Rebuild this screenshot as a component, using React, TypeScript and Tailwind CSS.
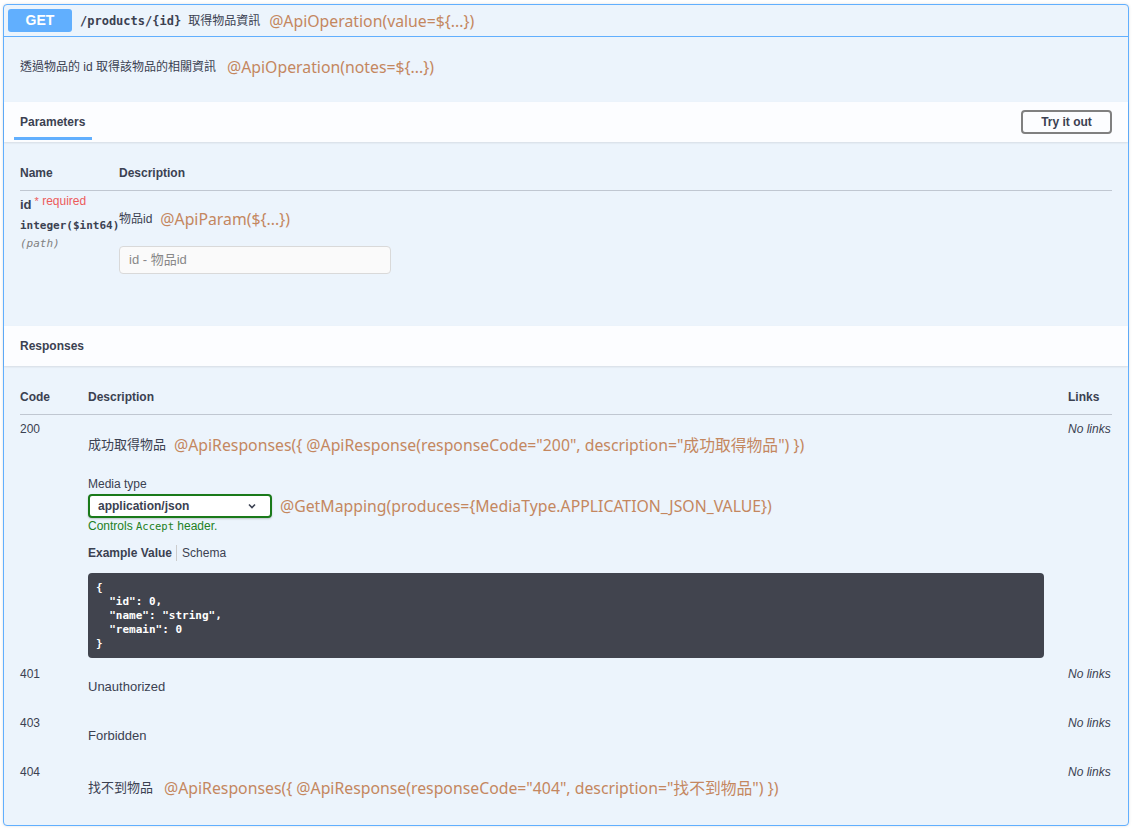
import React from "react";

const ann =
  "font-['Noto_Sans','Noto_Sans_CJK_TC',sans-serif] text-[15.8px] leading-[22px] text-[#c4875f]";
const mono = "font-['DejaVu_Sans_Mono','Liberation_Mono',monospace]";

type Resp = {
  code: string;
  desc: string;
  note?: string;
  body?: boolean;
};

const responses: Resp[] = [
  {
    code: "200",
    desc: "成功取得物品",
    note: '@ApiResponses({ @ApiResponse(responseCode="200", description="成功取得物品") })',
    body: true,
  },
  { code: "401", desc: "Unauthorized" },
  { code: "403", desc: "Forbidden" },
  {
    code: "404",
    desc: "找不到物品",
    note: '@ApiResponses({ @ApiResponse(responseCode="404", description="找不到物品") })',
  },
];

function SectionHeader({ children }: { children: React.ReactNode }) {
  return (
    <div className="h-[40px] bg-white/85 shadow-[0_1px_2px_rgba(0,0,0,0.1)] flex items-center justify-between pl-[16px] pr-[16px]">
      {children}
    </div>
  );
}

export default function App() {
  return (
    <div className="min-h-screen bg-white pt-[4px] pl-[3px] font-['Liberation_Sans','Noto_Sans_CJK_TC',sans-serif] text-[#3b4151]">
      <div className="w-[1126px] border border-[#61affe] rounded-[4px] bg-[#ecf4fc] shadow-[0_0_3px_rgba(0,0,0,0.12)]">
        {/* summary */}
        <div className="h-[32px] flex items-center pl-[4px] border-b border-[#61affe]">
          <div className="w-[64px] h-[23px] rounded-[3px] bg-[#61affe] text-white font-bold text-[14px] flex items-center justify-center">
            GET
          </div>
          <span className={`${mono} ml-[8px] text-[12px] font-bold`}>/products/{"{id}"}</span>
          <span className="ml-[7px] text-[12px]">取得物品資訊</span>
          <span className={`${ann} ml-[9px]`}>@ApiOperation(value=${"{...}"})</span>
        </div>

        {/* description */}
        <div className="h-[65px] flex items-center pl-[16px] pb-[5px]">
          <span className="text-[12px]">透過物品的 id 取得該物品的相關資訊</span>
          <span className={`${ann} ml-[11px]`}>@ApiOperation(notes=${"{...}"})</span>
        </div>

        {/* parameters */}
        <div className="h-[40px] bg-white/85 shadow-[0_1px_2px_rgba(0,0,0,0.1)] flex items-stretch justify-between pl-[10px] pr-[16px]">
          <div className="w-[78px] flex flex-col">
            <div className="pt-[11px] pl-[6px] leading-[18px] text-[12px] font-bold">Parameters</div>
            <div className="mt-[6px] h-[3px] bg-[#61affe]" />
          </div>
          <div className="flex items-center">
            <button className="w-[91px] h-[24px] border-2 border-[#808080] rounded-[4px] text-[12px] font-bold bg-transparent">
              Try it out
            </button>
          </div>
        </div>

        <div className="h-[184px] px-[16px] pt-[22px]">
          <div className="flex text-[12px] font-bold leading-[18px] pb-[8px] border-b border-[#3b4151]/25">
            <div className="w-[99px]">Name</div>
            <div>Description</div>
          </div>
          <div className="flex">
            <div className="w-[99px] pt-[5px]">
              <div className="flex items-start h-[18px]">
                <span className="text-[13px] font-bold leading-[18px]">id</span>
                <span className="ml-[3px] text-[12px] leading-[12px] text-[#ec5b5b] -mt-[1px] whitespace-nowrap">
                  <span className="text-[11px]">*</span> required
                </span>
              </div>
              <div className={`${mono} mt-[3px] text-[11px] font-bold leading-[18px] whitespace-nowrap`}>
                integer($int64)
              </div>
              <div className={`${mono} text-[11px] italic leading-[18px] text-[#808080]`}>(path)</div>
            </div>
            <div className="pt-[17px]">
              <div className="flex items-center">
                <span className="text-[12px]">物品id</span>
                <span className={`${ann} ml-[8px]`}>@ApiParam(${"{...}"})</span>
              </div>
              <div className="mt-[16px] w-[272px] h-[28px] border border-[#d9d9d9] rounded-[4px] bg-[#fafafa] flex items-center pl-[9px] text-[13px] text-[#888]">
                id - 物品id
              </div>
            </div>
          </div>
        </div>

        {/* responses */}
        <SectionHeader>
          <span className="text-[12px] font-bold">Responses</span>
        </SectionHeader>

        <div className="px-[16px] pt-[22px] pb-[13px]">
          <div className="flex text-[12px] font-bold leading-[18px] pb-[8px] border-b border-[#3b4151]/25">
            <div className="w-[68px]">Code</div>
            <div className="flex-1">Description</div>
            <div className="w-[44px] -ml-[1px]">Links</div>
          </div>

          {responses.map((r) => (
            <div key={r.code} className={`flex ${r.body ? "pb-[2px]" : "pb-[13px]"}`}>
              <div className="w-[68px] pt-[5px] text-[12px] leading-[18px]">{r.code}</div>
              <div className="flex-1 pr-[24px]">
                {r.note ? (
                  <div className="pt-[19px] flex items-center">
                    <span className="text-[13px]">{r.desc}</span>
                    <span className={`${ann} ${r.code === "404" ? "ml-[11px]" : "ml-[8px]"}`}>{r.note}</span>
                  </div>
                ) : (
                  <div className="pt-[18px] text-[13px] leading-[18px]">{r.desc}</div>
                )}

                {r.body && (
                  <div>
                    <div className="mt-[20px] text-[12px] leading-[16px]">Media type</div>
                    <div className="mt-[2px] flex items-center">
                      <div className="w-[184px] h-[24px] border-2 border-[#1a7a1a] rounded-[4px] bg-white shadow-[0_1px_2px_rgba(0,0,0,0.2)] flex items-center justify-between pl-[8px] pr-[14px]">
                        <span className="text-[12px] font-bold">application/json</span>
                        <svg width="8" height="6" viewBox="0 0 8 6" fill="none">
                          <path d="M1 1.5 L4 4.5 L7 1.5" stroke="#3b4151" strokeWidth="1.6" />
                        </svg>
                      </div>
                      <span className={`${ann} ml-[8px]`}>
                        @GetMapping(produces={"{MediaType.APPLICATION_JSON_VALUE}"})
                      </span>
                    </div>
                    <div className="mt-[1px] text-[12px] leading-[14px] text-[#238023]">
                      Controls <span className={`${mono} text-[10.5px]`}>Accept</span> header.
                    </div>
                    <div className="mt-[12px] flex items-center text-[12px] leading-[16px]">
                      <span className="font-bold pr-[4px]">Example Value</span>
                      <span className="pl-[5px] border-l border-[#ccc]">Schema</span>
                    </div>
                    <pre
                      className={`${mono} mt-[12px] h-[85px] rounded-[4px] bg-[#41444e] text-white text-[11px] font-bold leading-[14px] pl-[8px] pt-[8px]`}
                    >
{`{
  "id": 0,
  "name": "string",
  "remain": 0
}`}
                    </pre>
                  </div>
                )}
              </div>
              <div className="w-[44px] pt-[5px] text-[12px] leading-[18px] italic whitespace-nowrap">No links</div>
            </div>
          ))}
        </div>
      </div>
    </div>
  );
}
